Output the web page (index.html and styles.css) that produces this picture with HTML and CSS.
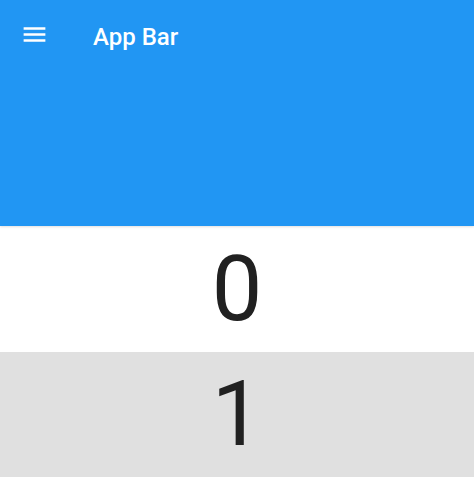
FILE: index.html
```html
<!DOCTYPE html>
<html>
<head>
<meta charset="utf-8">
<link rel="stylesheet" href="styles.css">
</head>
<body>
<header class="app-bar">
  <div class="toolbar">
    <svg class="menu-icon" viewBox="0 0 24 24" width="29" height="29"><path d="M3 18h18v-2H3v2zm0-5h18v-2H3v2zm0-7v2h18V6H3z" fill="#fff"/></svg>
    <h1 class="title">App Bar</h1>
  </div>
</header>
<main class="list">
  <div class="row row-white">0</div>
  <div class="row row-gray">1</div>
</main>
</body>
</html>
```
FILE: styles.css
```css
html, body {
  margin: 0;
  padding: 0;
  background: #ffffff;
  font-family: Roboto, "Liberation Sans", sans-serif;
}
.app-bar {
  height: 226px;
  background: #2196F3;
  box-shadow: 0 1px 2px rgba(0,0,0,0.12);
  position: relative;
  z-index: 1;
}
.toolbar {
  display: flex;
  align-items: flex-start;
  padding: 20px 0 0 20px;
}
.menu-icon {
  display: block;
  flex: none;
}
.title {
  margin: 3px 0 0 44px;
  font-size: 24px;
  font-weight: 500;
  line-height: 28px;
  color: #ffffff;
}
.list {
  display: flex;
  flex-direction: column;
}
.row {
  text-align: center;
  font-size: 90px;
  font-weight: 400;
  color: #212121;
}
.row-white {
  height: 126px;
  line-height: 128px;
  background: #ffffff;
}
.row-gray {
  height: 125px;
  line-height: 125px;
  background: #E0E0E0;
}
```
